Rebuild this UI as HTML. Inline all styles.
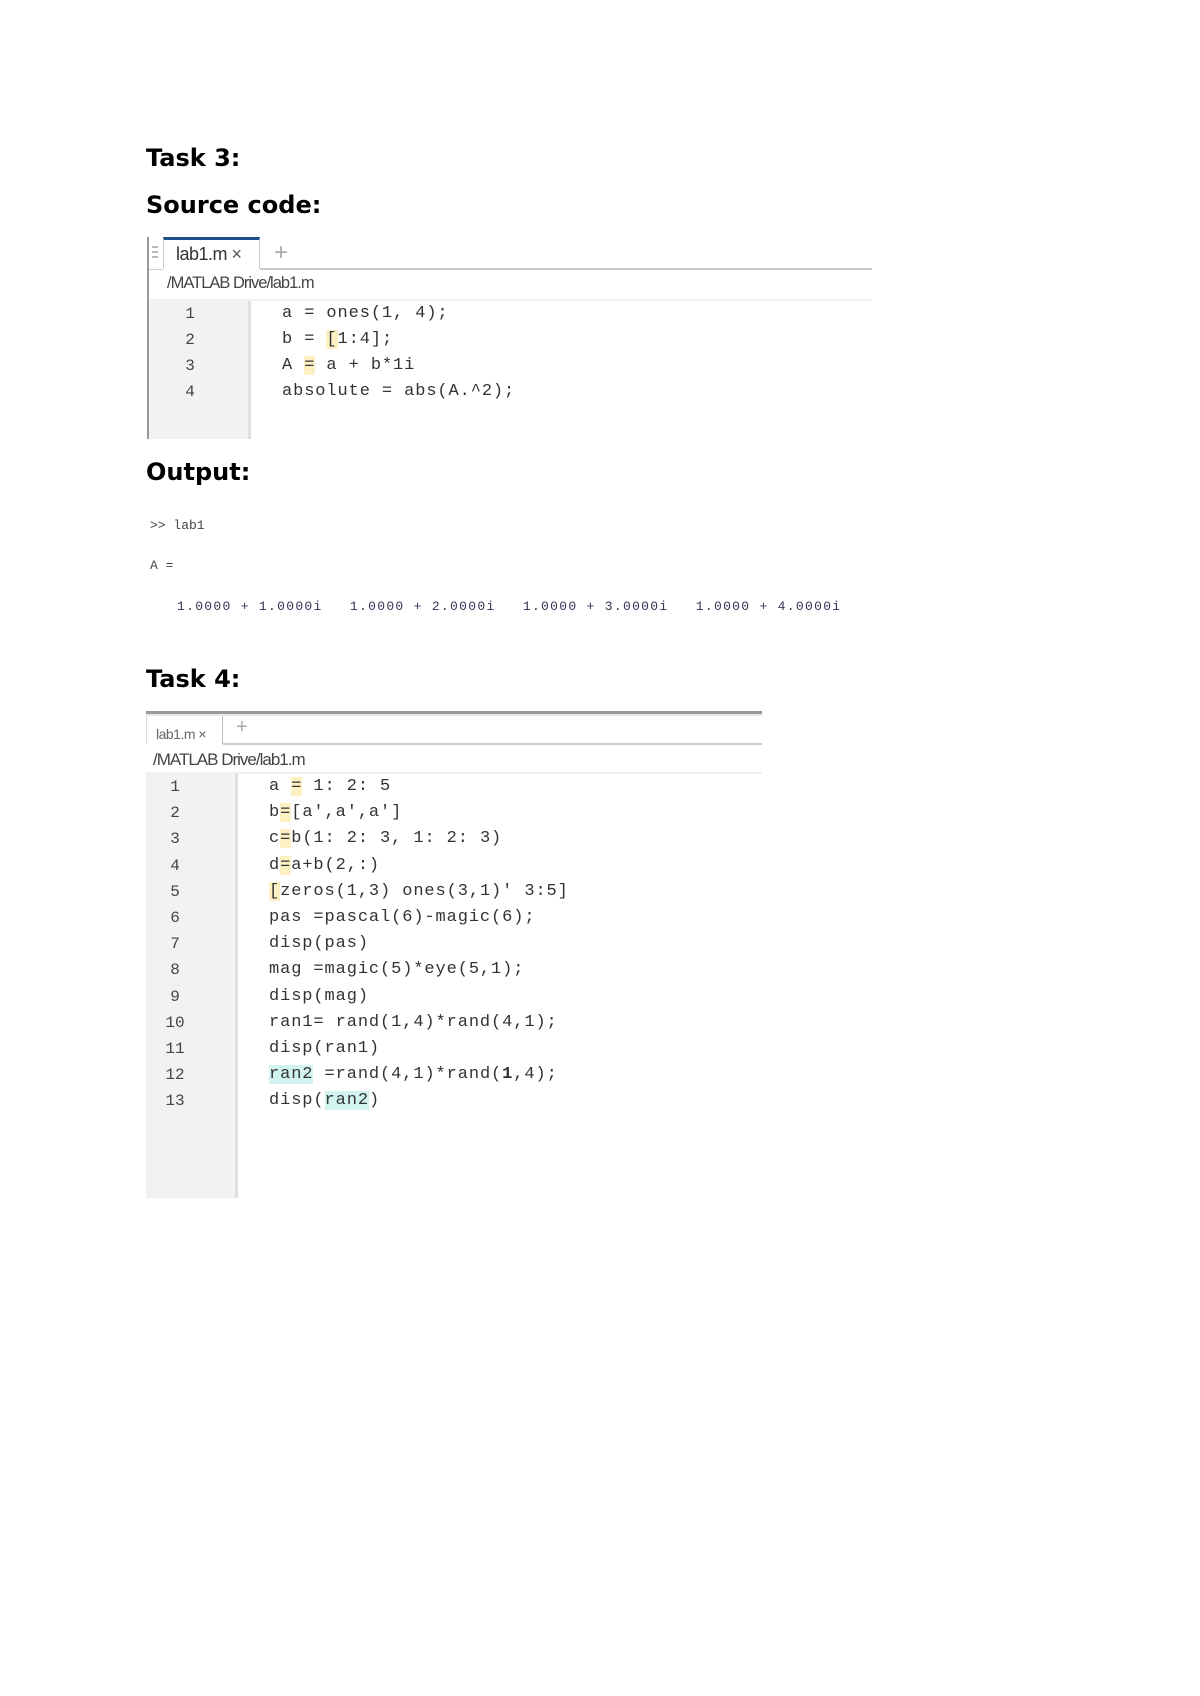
<!DOCTYPE html>
<html><head><meta charset="utf-8">
<style>
*{margin:0;padding:0;box-sizing:border-box}
body{width:1200px;height:1696px;background:#fff;position:relative;overflow:hidden;font-family:"DejaVu Sans","Liberation Sans",sans-serif}
.h{position:absolute;left:146px;font-weight:bold;font-size:24px;color:#000;line-height:28px}
.abs{position:absolute}
.mono{font-family:"Liberation Mono","DejaVu Sans Mono",monospace}
.code{position:absolute;font-family:"Liberation Mono",monospace;font-size:17px;letter-spacing:0.9px;color:#333;white-space:pre;line-height:26px}
.ln{position:absolute;font-family:"Liberation Mono",monospace;font-size:16px;color:#444;white-space:pre;line-height:26px;text-align:center}
.tabtxt{font-family:"Liberation Sans",sans-serif;color:#333}
.hl{background:#fdf1c4}
.cy{background:#d2f4f0}
</style></head><body>

<div class="h" style="top:144px">Task 3:</div>
<div class="h" style="top:191px">Source code:</div>

<!-- Editor 1 -->
<div class="abs" style="left:147px;top:237px;width:2px;height:202px;background:#9a9a9a"></div>
<div class="abs" style="left:152px;top:246px;width:6px;height:12px;border-top:2px solid #bbb;border-bottom:2px solid #bbb"></div>
<div class="abs" style="left:152px;top:251px;width:6px;height:2px;background:#bbb"></div>
<div class="abs" style="left:163px;top:237px;width:97px;height:32px;border-top:3px solid #1f4e8c;border-left:1px solid #ccc;border-right:1px solid #ccc;background:#fff"></div>
<div class="abs tabtxt" style="left:176px;top:244px;font-size:18px;letter-spacing:-0.5px">lab1.m <span style="color:#555">×</span></div>
<div class="abs" style="left:274px;top:239px;font-size:24px;color:#aaa;font-family:'Liberation Sans'">+</div>
<div class="abs" style="left:260px;top:268px;width:612px;height:2px;background:#ccc"></div>
<div class="abs" style="left:149px;top:269px;width:14px;height:1px;background:#ccc"></div>
<div class="abs tabtxt" style="left:167px;top:274px;font-size:16.5px;letter-spacing:-1px;color:#444">/MATLAB Drive/lab1.m</div>
<div class="abs" style="left:149px;top:299px;width:723px;height:2px;background:#f0f0f0"></div>
<div class="abs" style="left:149px;top:301px;width:99px;height:138px;background:#f2f2f2"></div>
<div class="abs" style="left:248px;top:301px;width:3px;height:138px;background:#e0e0e0"></div>
<div class="ln" style="left:170px;top:301px;width:40px">1
2
3
4</div>
<div class="code" style="left:282px;top:301px">a = ones(1, 4);
b = <span class="hl">[</span>1:4];
A <span class="hl">=</span> a + b*1i
absolute = abs(A.^2);</div>

<div class="h" style="top:458px">Output:</div>
<div class="abs mono" style="left:150px;top:518px;font-size:13px;color:#444;white-space:pre">&gt;&gt; lab1</div>
<div class="abs mono" style="left:150px;top:558px;font-size:13px;color:#444;white-space:pre">A =</div>
<div class="abs mono" style="left:177px;top:599px;font-size:13px;color:#335;white-space:pre;letter-spacing:1.3px">1.0000 + 1.0000i   1.0000 + 2.0000i   1.0000 + 3.0000i   1.0000 + 4.0000i</div>

<div class="h" style="top:665px">Task 4:</div>

<!-- Editor 2 -->
<div class="abs" style="left:146px;top:711px;width:616px;height:3px;background:#999"></div>
<div class="abs" style="left:146px;top:714px;width:616px;height:2px;background:#e8e8e8"></div>
<div class="abs" style="left:146px;top:716px;width:77px;height:28px;border-right:1px solid #bbb;border-left:1px solid #ddd;background:#fff"></div>
<div class="abs tabtxt" style="left:156px;top:726px;font-size:14px;letter-spacing:-0.5px;color:#666">lab1.m <span>×</span></div>
<div class="abs" style="left:236px;top:716px;font-size:20px;color:#aaa;font-family:'Liberation Sans'">+</div>
<div class="abs" style="left:223px;top:743px;width:539px;height:2px;background:#ccc"></div>
<div class="abs tabtxt" style="left:153px;top:750px;font-size:17px;letter-spacing:-1px;color:#444">/MATLAB Drive/lab1.m</div>
<div class="abs" style="left:146px;top:772px;width:616px;height:2px;background:#f0f0f0"></div>
<div class="abs" style="left:146px;top:774px;width:89px;height:424px;background:#f2f2f2"></div>
<div class="abs" style="left:235px;top:774px;width:3px;height:424px;background:#e0e0e0"></div>
<div class="ln" style="left:155px;top:774px;width:40px;line-height:26.2px">1
2
3
4
5
6
7
8
9
10
11
12
13</div>
<div class="code" style="left:269px;top:774px;line-height:26.2px">a <span class="hl">=</span> 1: 2: 5
b<span class="hl">=</span>[a',a',a']
c<span class="hl">=</span>b(1: 2: 3, 1: 2: 3)
d<span class="hl">=</span>a+b(2,:)
<span class="hl">[</span>zeros(1,3) ones(3,1)' 3:5]
pas =pascal(6)-magic(6);
disp(pas)
mag =magic(5)*eye(5,1);
disp(mag)
ran1= rand(1,4)*rand(4,1);
disp(ran1)
<span class="cy">ran2</span> =rand(4,1)*rand(<b>1</b>,4);
disp(<span class="cy">ran2</span>)</div>

</body></html>
